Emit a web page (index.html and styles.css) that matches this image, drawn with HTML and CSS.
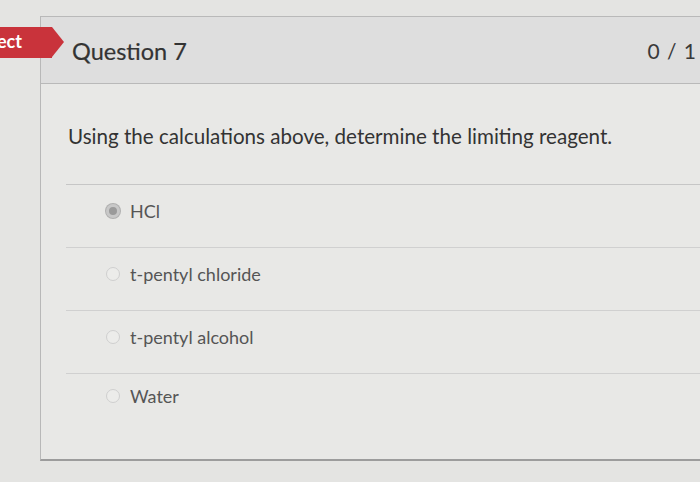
FILE: index.html
```html
<!DOCTYPE html>
<html>
<head>
<meta charset="utf-8">
<link rel="stylesheet" href="styles.css">
</head>
<body>
<div class="page">
  <div class="tab">ect</div>
  <div class="card">
    <div class="head">
      <div class="title">Question 7</div>
      <div class="score">0 / 1</div>
    </div>
    <div class="body">
      <p class="question">Using the calculations above, determine the limiting reagent.</p>
      <div class="options">
        <div class="opt"><span class="radio on"></span><span class="label">HCl</span></div>
        <div class="opt"><span class="radio"></span><span class="label">t-pentyl chloride</span></div>
        <div class="opt"><span class="radio"></span><span class="label">t-pentyl alcohol</span></div>
        <div class="opt last"><span class="radio"></span><span class="label">Water</span></div>
      </div>
    </div>
  </div>
</div>
</body>
</html>
```
FILE: styles.css
```css
html, body { margin: 0; padding: 0; }
body {
  width: 700px; height: 482px; overflow: hidden;
  background: #e4e4e2;
  font-family: Lato, "Open Sans", sans-serif;
  color: #3a3a3a;
}
.page { position: relative; padding: 16px 0 0 40px; }
.tab {
  position: absolute; left: 0; top: 27px;
  width: 52px; height: 31px;
  background: #c9333b;
  color: #fff; font-size: 18px; font-weight: 700;
  line-height: 29px;
  text-indent: -3px;
}
.tab::after {
  content: ""; position: absolute; right: -12px; top: 0;
  border-top: 15.5px solid transparent; border-bottom: 15.5px solid transparent;
  border-left: 12px solid #c9333b;
}
.card {
  border-left: 1px solid #b8b8b8;
  border-top: 1px solid #b9b9b9;
  border-bottom: 2px solid #9c9c9c;
  background: #e8e8e6;
  height: 445px;
  box-sizing: border-box;
}
.head {
  display: flex; align-items: center; justify-content: space-between;
  height: 66px; padding: 0 0 0 31px;
  background: #dedede;
  border-bottom: 1px solid #b9b9b9;
}
.title { font-size: 23.5px; color: #333; margin-top: 2px; -webkit-text-stroke: 0.2px #333; }
.score { font-size: 21px; color: #3a3a3a; margin-right: 3px; letter-spacing: 1px; }
.body { padding: 0 0 0 25px; }
.question {
  margin: 0; padding: 40px 0 0 2px; height: 60px;
  font-size: 20.6px; color: #333;
}
.options { border-top: 1px solid #c6c6c6; }
.opt {
  display: flex; align-items: center; height: 63px;
  border-bottom: 1px solid #d0d0d0;
  padding-left: 40px; padding-bottom: 10px; box-sizing: border-box;
}
.opt.last { border-bottom: none; height: 44px; padding-bottom: 0; }
.radio {
  width: 14px; height: 14px; border-radius: 50%;
  border: 1px solid #cfcfcf; background: #ececea;
  margin-right: 10px; box-sizing: border-box;
}
.radio.on { background: #9a9a9a; border: 3px solid #c8c8c8; box-shadow: 0 0 0 1px #b0b0b0; }
.label { font-size: 18px; color: #555; }
```
